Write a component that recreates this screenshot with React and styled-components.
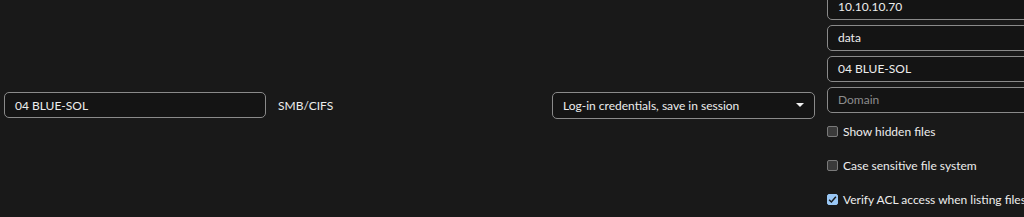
import React from 'react';
import styled, { createGlobalStyle } from 'styled-components';

const GlobalStyle = createGlobalStyle`
  html, body {
    margin: 0;
    padding: 0;
    background: #191919;
    overflow: hidden;
  }
  body {
    font-family: Lato, 'Noto Sans', sans-serif;
    color: #e6e6e6;
  }
`;

const Row = styled.div`
  display: grid;
  grid-template-columns: 262px 262px 263px 262px;
  grid-template-rows: 210px;
  column-gap: 12px;
  align-items: center;
  height: 210px;
  padding-left: 4px;
`;

const Field = styled.div`
  height: ${({ h }) => h || 26}px;
  box-sizing: border-box;
  border: 1px solid #8a8a8a;
  border-radius: 5px;
  background: #141414;
  padding: 0 10px;
  display: flex;
  align-items: center;
  font-size: 12px;
  color: ${({ placeholder }) => (placeholder ? '#8c8c8c' : '#ededed')};
  white-space: nowrap;
  overflow: hidden;
`;

const Plain = styled.div`
  font-size: 12px;
  color: #ededed;
`;

const SelectBox = styled(Field)`
  justify-content: space-between;
  padding-right: 10px;
`;

const Caret = styled.span`
  width: 0;
  height: 0;
  border-left: 4px solid transparent;
  border-right: 4px solid transparent;
  border-top: 4px solid #f0f0f0;
`;

const Column = styled.div`
  display: flex;
  flex-direction: column;
  gap: 5px;
`;

const Checks = styled.div`
  display: flex;
  flex-direction: column;
  margin-top: -3px;
`;

const CheckRow = styled.label`
  height: 34px;
  display: flex;
  align-items: center;
  gap: 5px;
  font-size: 12px;
  color: #ededed;
  white-space: nowrap;
`;

const Box = styled.span`
  width: 11px;
  height: 11px;
  box-sizing: border-box;
  border-radius: 2px;
  border: 1px solid ${({ on }) => (on ? '#99c7f5' : '#7a7a7a')};
  background: ${({ on }) => (on ? '#99c7f5' : '#3a3a3a')};
  display: flex;
  align-items: center;
  justify-content: center;
`;

function Check({ on, children }) {
  return (
    <CheckRow>
      <Box on={on ? 1 : 0}>
        {on && (
          <svg width="9" height="9" viewBox="0 0 8 8">
            <path d="M1 4.2 L3 6.2 L7 1.6" fill="none" stroke="#1a1a1a" strokeWidth="1.3" />
          </svg>
        )}
      </Box>
      {children}
    </CheckRow>
  );
}

export default function App() {
  return (
    <>
      <GlobalStyle />
      <Row>
        <Field>04 BLUE-SOL</Field>
        <Plain>SMB/CIFS</Plain>
        <SelectBox h={27}>
          <span>Log-in credentials, save in session</span>
          <Caret />
        </SelectBox>
        <Column>
          <Field>10.10.10.70</Field>
          <Field>data</Field>
          <Field>04 BLUE-SOL</Field>
          <Field placeholder="1">Domain</Field>
          <Checks>
            <Check>Show hidden files</Check>
            <Check>Case sensitive file system</Check>
            <Check on>Verify ACL access when listing files</Check>
          </Checks>
        </Column>
      </Row>
    </>
  );
}
